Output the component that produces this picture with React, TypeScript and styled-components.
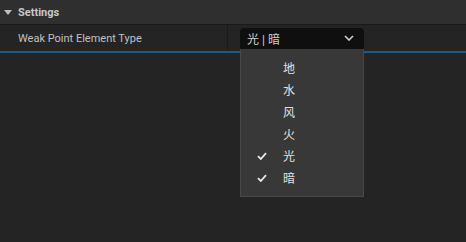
import React from 'react';
import styled, { createGlobalStyle } from 'styled-components';

const GlobalStyle = createGlobalStyle`
  html, body {
    margin: 0;
    padding: 0;
    background: #242424;
    width: 466px;
    height: 242px;
    overflow: hidden;
  }
  body {
    font-family: Roboto, "Noto Sans CJK SC", sans-serif;
    color: #c0c0c0;
  }
`;

const Panel = styled.div`
  position: relative;
  width: 466px;
  height: 242px;
  background: #242424;
`;

const Header = styled.div`
  display: flex;
  align-items: center;
  height: 24px;
  padding-left: 4px;
  gap: 6px;
  background: #2f2f2f;
  border-bottom: 1px solid #1a1a1a;
  font-size: 11px;
  font-weight: 700;
  color: #c8c8c8;
`;

const Caret = styled.span`
  width: 0;
  height: 0;
  border-left: 4px solid transparent;
  border-right: 4px solid transparent;
  border-top: 5px solid #c0c0c0;
`;

const Row = styled.div`
  display: grid;
  grid-template-columns: 228px 1fr;
  height: 26px;
  background: #242424;
  border-bottom: 2px solid #1d5a8c;
`;

const NameCell = styled.div`
  display: flex;
  align-items: center;
  padding-left: 18px;
  font-size: 11px;
  color: #c0c0c0;
  border-right: 1px solid #1a1a1a;
`;

const ValueCell = styled.div`
  display: flex;
  align-items: center;
  padding-left: 12px;
`;

const Combo = styled.div`
  position: relative;
  display: flex;
  align-items: center;
  justify-content: space-between;
  box-sizing: border-box;
  width: 124px;
  height: 21px;
  padding: 0 10px 0 7px;
  background: #0f0f0f;
  border-radius: 4px 4px 0 0;
  font-family: "Noto Sans CJK SC", sans-serif;
  font-size: 12px;
  color: #d0d0d0;
`;

const ComboText = styled.span`
  white-space: pre;
`;

const Sep = styled.span`
  font-family: Roboto, sans-serif;
`;

const Menu = styled.ul`
  position: absolute;
  left: 0;
  top: 21px;
  box-sizing: border-box;
  width: 124px;
  margin: 0;
  padding: 8px 0 7px;
  list-style: none;
  background: #383838;
  border: 1px solid #484848;
  border-top: none;
  z-index: 2;
`;

const Item = styled.li`
  display: flex;
  align-items: center;
  height: 22px;
  font-family: "Noto Sans CJK SC", sans-serif;
  font-size: 12px;
  color: #e0e0e0;
`;

const CheckSlot = styled.span`
  display: flex;
  justify-content: center;
  width: 42px;
`;

const Check = () => (
  <svg width="10" height="8" viewBox="0 0 10 8">
    <path d="M1 4.2 L3.8 7 L9 1.2" fill="none" stroke="#e8e8e8" strokeWidth="1.8" />
  </svg>
);

const Chevron = () => (
  <svg width="10" height="6" viewBox="0 0 10 6">
    <path d="M1 1 L5 5 L9 1" fill="none" stroke="#d0d0d0" strokeWidth="1.6" />
  </svg>
);

const options = [
  { label: '地', checked: false },
  { label: '水', checked: false },
  { label: '风', checked: false },
  { label: '火', checked: false },
  { label: '光', checked: true },
  { label: '暗', checked: true },
];

export default function App() {
  return (
    <>
      <GlobalStyle />
      <Panel>
        <Header>
          <Caret />
          Settings
        </Header>
        <Row>
          <NameCell>Weak Point Element Type</NameCell>
          <ValueCell>
            <Combo>
              <ComboText>
                光<Sep> | </Sep>暗
              </ComboText>
              <Chevron />
              <Menu>
                {options.map((o) => (
                  <Item key={o.label}>
                    <CheckSlot>{o.checked && <Check />}</CheckSlot>
                    {o.label}
                  </Item>
                ))}
              </Menu>
            </Combo>
          </ValueCell>
        </Row>
      </Panel>
    </>
  );
}
